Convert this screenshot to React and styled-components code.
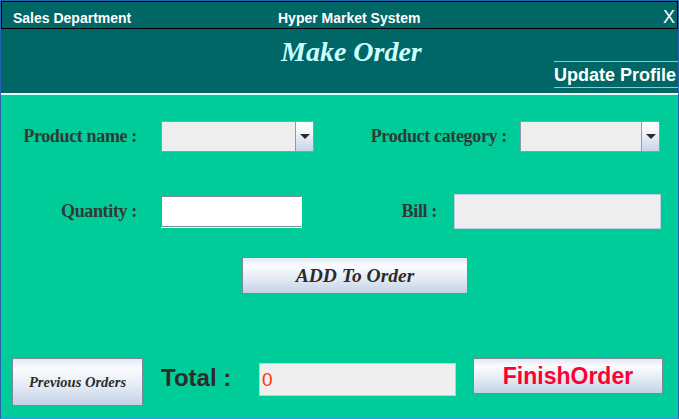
import React from "react";
import styled, { createGlobalStyle } from "styled-components";

const Global = createGlobalStyle`
  html, body { margin: 0; padding: 0; background: #ffffff; }
  * { box-sizing: border-box; }
`;

const Frame = styled.div`
  width: 679px;
  height: 419px;
  border: 1px solid #2a64b0;
  border-bottom-color: #2f9bf0;
  background: #00cc99;
  display: flex;
  flex-direction: column;
  overflow: hidden;
`;

const Header = styled.header`
  background: #006666;
  border-bottom: 2px solid #e4f6f1;
  display: flex;
  flex-direction: column;
  flex: none;
`;

const TitleBar = styled.div`
  height: 28px;
  border: 1px solid #000000;
  display: flex;
  align-items: baseline;
  padding: 6px 2px 0 11px;
  color: #ffffff;
  font-family: "Liberation Sans", Arial, sans-serif;
`;

const TitleText = styled.span`
  font-size: 14px;
  font-weight: bold;
  line-height: 16px;
  width: ${(p) => (p.$width ? `${p.$width}px` : "auto")};
  flex: none;
`;

const CloseMark = styled.span`
  margin-left: auto;
  font-size: 18px;
  line-height: 18px;
  font-weight: normal;
  cursor: pointer;
`;

const HeaderBody = styled.div`
  height: 64px;
  display: flex;
  align-items: flex-start;
  padding-left: 280px;
`;

const PageTitle = styled.h1`
  margin: 7px 0 0 0;
  font-family: "Liberation Serif", "Times New Roman", serif;
  font-style: italic;
  font-weight: bold;
  font-size: 28px;
  line-height: 32px;
  color: #ccffff;
`;

const ProfileLink = styled.div`
  margin: 32px 0 0 auto;
  width: 124px;
  padding-top: 2px;
  border-top: 1px solid #9fc2c2;
  border-bottom: 1px solid #9fc2c2;
  font-family: "Liberation Sans", Arial, sans-serif;
  font-weight: bold;
  font-size: 18px;
  line-height: 23px;
  color: #ffffff;
  white-space: nowrap;
  overflow: hidden;
`;

const Body = styled.main`
  flex: 1;
  display: flex;
  flex-direction: column;
`;

const FormRow = styled.div`
  display: flex;
  align-items: center;
  height: ${(p) => p.$height}px;
  margin-top: ${(p) => p.$top}px;
`;

const Label = styled.label`
  width: ${(p) => p.$width}px;
  flex: none;
  text-align: right;
  font-family: "Liberation Serif", "Times New Roman", serif;
  font-weight: bold;
  font-size: 18px;
  letter-spacing: -0.35px;
  color: #2f3a36;
  white-space: nowrap;
`;

const Combo = styled.div`
  margin-left: ${(p) => p.$left}px;
  width: ${(p) => p.$width}px;
  height: 31px;
  flex: none;
  display: flex;
  border: 1px solid #8c9cb1;
  background: #eeeeee;
`;

const ComboValue = styled.div`
  flex: 1;
`;

const ComboArrow = styled.div`
  width: 18px;
  border-left: 1px solid #8c9cb1;
  background: linear-gradient(#ffffff 0%, #f3f6fb 30%, #c6d5e8 100%);
  display: flex;
  align-items: center;
  justify-content: center;
`;

const TextField = styled.div`
  margin-left: ${(p) => p.$left}px;
  width: ${(p) => p.$width}px;
  height: ${(p) => p.$height}px;
  flex: none;
  background: ${(p) => (p.$white ? "#ffffff" : "#efefef")};
  border: 1px solid ${(p) => (p.$white ? "#7b8b9b" : "#b5cfe4")};
  border-right-color: ${(p) => (p.$white ? "#ffffff" : "#b5cfe4")};
  box-shadow: ${(p) => (p.$white ? "0 1px 0 #ffffff" : "none")};
  font-family: "Liberation Sans", Arial, sans-serif;
  font-size: 19px;
  color: #ff3300;
  display: flex;
  align-items: center;
  padding-left: 2px;
`;

const Button = styled.button`
  margin-left: ${(p) => p.$left}px;
  margin-top: ${(p) => p.$top || 0}px;
  width: ${(p) => p.$width}px;
  height: ${(p) => p.$height}px;
  flex: none;
  padding: 0;
  border: 1px solid #7b8897;
  background: linear-gradient(#e2e9f3 0%, #fbfcfe 22%, #e6edf6 55%, #c3d2e6 100%);
  display: flex;
  align-items: center;
  justify-content: center;
  cursor: pointer;
`;

const SerifCaption = styled.span`
  font-family: "Liberation Serif", "Times New Roman", serif;
  font-style: italic;
  font-weight: bold;
  font-size: ${(p) => p.$size}px;
  color: #2b2b2b;
  white-space: nowrap;
`;

const SansCaption = styled.span`
  font-family: "Liberation Sans", Arial, sans-serif;
  font-weight: bold;
  font-size: ${(p) => p.$size}px;
  color: ${(p) => p.$color};
  white-space: nowrap;
`;

const ActionRow = styled.div`
  display: flex;
  margin-top: ${(p) => p.$top}px;
  height: ${(p) => p.$height}px;
`;

const BottomRow = styled.div`
  display: flex;
  align-items: flex-start;
  margin-top: 64px;
`;

const TotalLabel = styled.span`
  margin: 6px 0 0 18px;
  font-family: "Liberation Sans", Arial, sans-serif;
  font-weight: bold;
  font-size: 24px;
  line-height: 28px;
  color: #2b2b2b;
  width: 72px;
  flex: none;
  white-space: nowrap;
`;

const TotalField = styled(TextField)`
  margin-top: 5px;
`;

function DownArrow() {
  return (
    <svg width="10" height="5" viewBox="0 0 10 5">
      <path d="M0 0 H10 L5 5 Z" fill="#2a2a2a" />
    </svg>
  );
}

export default function App() {
  return (
    <>
      <Global />
      <Frame>
        <Header>
          <TitleBar>
            <TitleText $width={265}>Sales Department</TitleText>
            <TitleText>Hyper Market System</TitleText>
            <CloseMark>X</CloseMark>
          </TitleBar>
          <HeaderBody>
            <PageTitle>Make Order</PageTitle>
            <ProfileLink>Update Profile</ProfileLink>
          </HeaderBody>
        </Header>
        <Body>
          <FormRow $top={26} $height={31}>
            <Label $width={136}>Product name :</Label>
            <Combo $left={24} $width={153}>
              <ComboValue />
              <ComboArrow>
                <DownArrow />
              </ComboArrow>
            </Combo>
            <Label $width={193}>Product category :</Label>
            <Combo $left={13} $width={140}>
              <ComboValue />
              <ComboArrow>
                <DownArrow />
              </ComboArrow>
            </Combo>
          </FormRow>
          <FormRow $top={42} $height={35}>
            <Label $width={136}>Quantity :</Label>
            <TextField $left={24} $width={141} $height={31} $white />
            <Label $width={135}>Bill :</Label>
            <TextField $left={17} $width={207} $height={35} />
          </FormRow>
          <ActionRow $top={28} $height={37}>
            <Button $left={241} $width={226} $height={37}>
              <SerifCaption $size={19.5}>ADD To Order</SerifCaption>
            </Button>
          </ActionRow>
          <BottomRow>
            <Button $left={11} $width={131} $height={48}>
              <SerifCaption $size={14.5}>Previous Orders</SerifCaption>
            </Button>
            <TotalLabel>Total :</TotalLabel>
            <TotalField $left={26} $width={197} $height={33}>0</TotalField>
            <Button $left={17} $width={190} $height={36}>
              <SansCaption $size={23} $color="#ff0033">FinishOrder</SansCaption>
            </Button>
          </BottomRow>
        </Body>
      </Frame>
    </>
  );
}
